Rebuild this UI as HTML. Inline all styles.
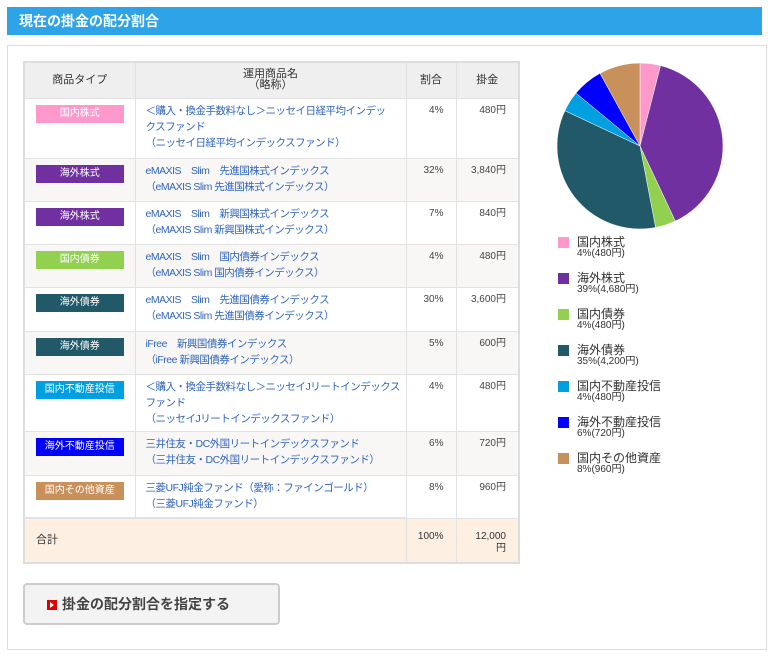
<!DOCTYPE html>
<html><head><meta charset="utf-8"><style>
*{margin:0;padding:0;box-sizing:border-box}
body{width:768px;height:659px;background:#fff;font-family:"Liberation Sans","Noto Sans CJK JP",sans-serif;position:relative;overflow:hidden;color:#333}
.hdr{position:absolute;left:7px;top:7px;width:755px;height:28px;background:#2ea3e8;color:#fff;font-weight:bold;font-size:14px;line-height:28px;padding-left:12px}
.box{position:absolute;left:7px;top:45px;width:760px;height:605px;border:1px solid #ddd}
table{position:absolute;left:23px;top:61px;width:495px;border-collapse:collapse;table-layout:fixed;font-size:11px;border:2px solid #ddd}
td,th{border:1px solid #e2e2e2;vertical-align:top;overflow:hidden}
th{background:#efefef;font-weight:normal;color:#333;vertical-align:middle;line-height:11px;font-size:11px}
tr.a td{background:#fff}tr.b td{background:#f8f7f5}
.bd{display:block;width:88px;height:18px;margin:6px auto 0;color:#fff;font-size:10px;line-height:18px;text-align:center}
.nm{color:#2f64c0;padding:4px 0 0 10px;line-height:16px;font-size:10.5px;letter-spacing:-0.5px;white-space:nowrap}
.n{text-align:right;padding:6px 12px 0 0;color:#444;font-size:10px;line-height:12px}
tr.t td{background:#fdefe2;color:#333}
.btn{position:absolute;left:23px;top:583px;width:257px;height:42px;border:2px solid #ccc;border-radius:4px;background:#f3f3f3;font-size:14px;font-weight:bold;color:#444;line-height:38px;padding-left:22px}
.btn i{display:inline-block;width:10px;height:10px;background:#d00;vertical-align:-1px;margin-right:5px;position:relative}
.btn i:after{content:"";position:absolute;left:3px;top:2px;border-left:4px solid #fff;border-top:3px solid transparent;border-bottom:3px solid transparent}
.lg{position:absolute;left:558px;font-size:12px;line-height:12px;color:#333}
.lg span{position:absolute;left:0;top:1px;width:11px;height:11px}
.lg div{position:absolute;left:19px;top:0;white-space:nowrap}
.lg small{position:absolute;left:19px;top:13px;font-size:10px;line-height:10px;white-space:nowrap}
</style></head><body>
<div class="hdr">現在の掛金の配分割合</div>
<div class="box"></div>
<table>
<colgroup><col style="width:111px"><col style="width:271px"><col style="width:50px"><col style="width:63px"></colgroup>
<tr style="height:36px"><th>商品タイプ</th><th>運用商品名<br>（略称）</th><th>割合</th><th>掛金</th></tr>
<tr class="a" style="height:60px"><td><span class="bd" style="background:#ff99cc">国内株式</span></td><td class="nm">＜購入・換金手数料なし＞ニッセイ日経平均インデッ<br>クスファンド<br>（ニッセイ日経平均インデックスファンド）</td><td class="n">4%</td><td class="n">480円</td></tr>
<tr class="b" style="height:43px"><td><span class="bd" style="background:#7030a0">海外株式</span></td><td class="nm">eMAXIS　Slim　先進国株式インデックス<br>（eMAXIS Slim 先進国株式インデックス）</td><td class="n">32%</td><td class="n">3,840円</td></tr>
<tr class="a" style="height:43px"><td><span class="bd" style="background:#7030a0">海外株式</span></td><td class="nm">eMAXIS　Slim　新興国株式インデックス<br>（eMAXIS Slim 新興国株式インデックス）</td><td class="n">7%</td><td class="n">840円</td></tr>
<tr class="b" style="height:43px"><td><span class="bd" style="background:#92d050">国内債券</span></td><td class="nm">eMAXIS　Slim　国内債券インデックス<br>（eMAXIS Slim 国内債券インデックス）</td><td class="n">4%</td><td class="n">480円</td></tr>
<tr class="a" style="height:44px"><td><span class="bd" style="background:#215968">海外債券</span></td><td class="nm">eMAXIS　Slim　先進国債券インデックス<br>（eMAXIS Slim 先進国債券インデックス）</td><td class="n">30%</td><td class="n">3,600円</td></tr>
<tr class="b" style="height:43px"><td><span class="bd" style="background:#215968">海外債券</span></td><td class="nm">iFree　新興国債券インデックス<br>（iFree 新興国債券インデックス）</td><td class="n">5%</td><td class="n">600円</td></tr>
<tr class="a" style="height:57px"><td><span class="bd" style="background:#00a0e0">国内不動産投信</span></td><td class="nm">＜購入・換金手数料なし＞ニッセイJリートインデックス<br>ファンド<br>（ニッセイJリートインデックスファンド）</td><td class="n">4%</td><td class="n">480円</td></tr>
<tr class="b" style="height:44px"><td><span class="bd" style="background:#0000ff">海外不動産投信</span></td><td class="nm">三井住友・DC外国リートインデックスファンド<br>（三井住友・DC外国リートインデックスファンド）</td><td class="n">6%</td><td class="n">720円</td></tr>
<tr class="a" style="height:43px"><td><span class="bd" style="background:#c8905a">国内その他資産</span></td><td class="nm">三菱UFJ純金ファンド（愛称：ファインゴールド）<br>（三菱UFJ純金ファンド）</td><td class="n">8%</td><td class="n">960円</td></tr>
<tr class="t" style="height:45px"><td colspan="2" style="padding:12px 0 0 11px;border-top:2px solid #e2e2e2">合計</td><td class="n" style="padding-top:12px">100%</td><td class="n" style="padding-top:12px">12,000<br>円</td></tr>
</table>
<div class="btn"><i></i>掛金の配分割合を指定する</div>
<svg style="position:absolute;left:0;top:0" width="768" height="659">
<g stroke="#fff" stroke-width="0.5">
<path d="M640,146 L640,63 A83,83 0 0 1 660.6,65.6Z" fill="#ff99cc"/>
<path d="M640,146 L660.6,65.6 A83,83 0 0 1 675.3,221.1Z" fill="#7030a0"/>
<path d="M640,146 L675.3,221.1 A83,83 0 0 1 655.6,227.5Z" fill="#92d050"/>
<path d="M640,146 L655.6,227.5 A83,83 0 0 1 564.9,110.7Z" fill="#215968"/>
<path d="M640,146 L564.9,110.7 A83,83 0 0 1 576,93.1Z" fill="#00a0e0"/>
<path d="M640,146 L576,93.1 A83,83 0 0 1 600,73.3Z" fill="#0000ff"/>
<path d="M640,146 L600,73.3 A83,83 0 0 1 640,63Z" fill="#c8905a"/>
</g></svg>
<div class="lg" style="top:236px"><span style="background:#ff99cc"></span><div>国内株式</div><small>4%(480円)</small></div>
<div class="lg" style="top:272px"><span style="background:#7030a0"></span><div>海外株式</div><small>39%(4,680円)</small></div>
<div class="lg" style="top:308px"><span style="background:#92d050"></span><div>国内債券</div><small>4%(480円)</small></div>
<div class="lg" style="top:344px"><span style="background:#215968"></span><div>海外債券</div><small>35%(4,200円)</small></div>
<div class="lg" style="top:380px"><span style="background:#00a0e0"></span><div>国内不動産投信</div><small>4%(480円)</small></div>
<div class="lg" style="top:416px"><span style="background:#0000ff"></span><div>海外不動産投信</div><small>6%(720円)</small></div>
<div class="lg" style="top:452px"><span style="background:#c8905a"></span><div>国内その他資産</div><small>8%(960円)</small></div>
</body></html>
